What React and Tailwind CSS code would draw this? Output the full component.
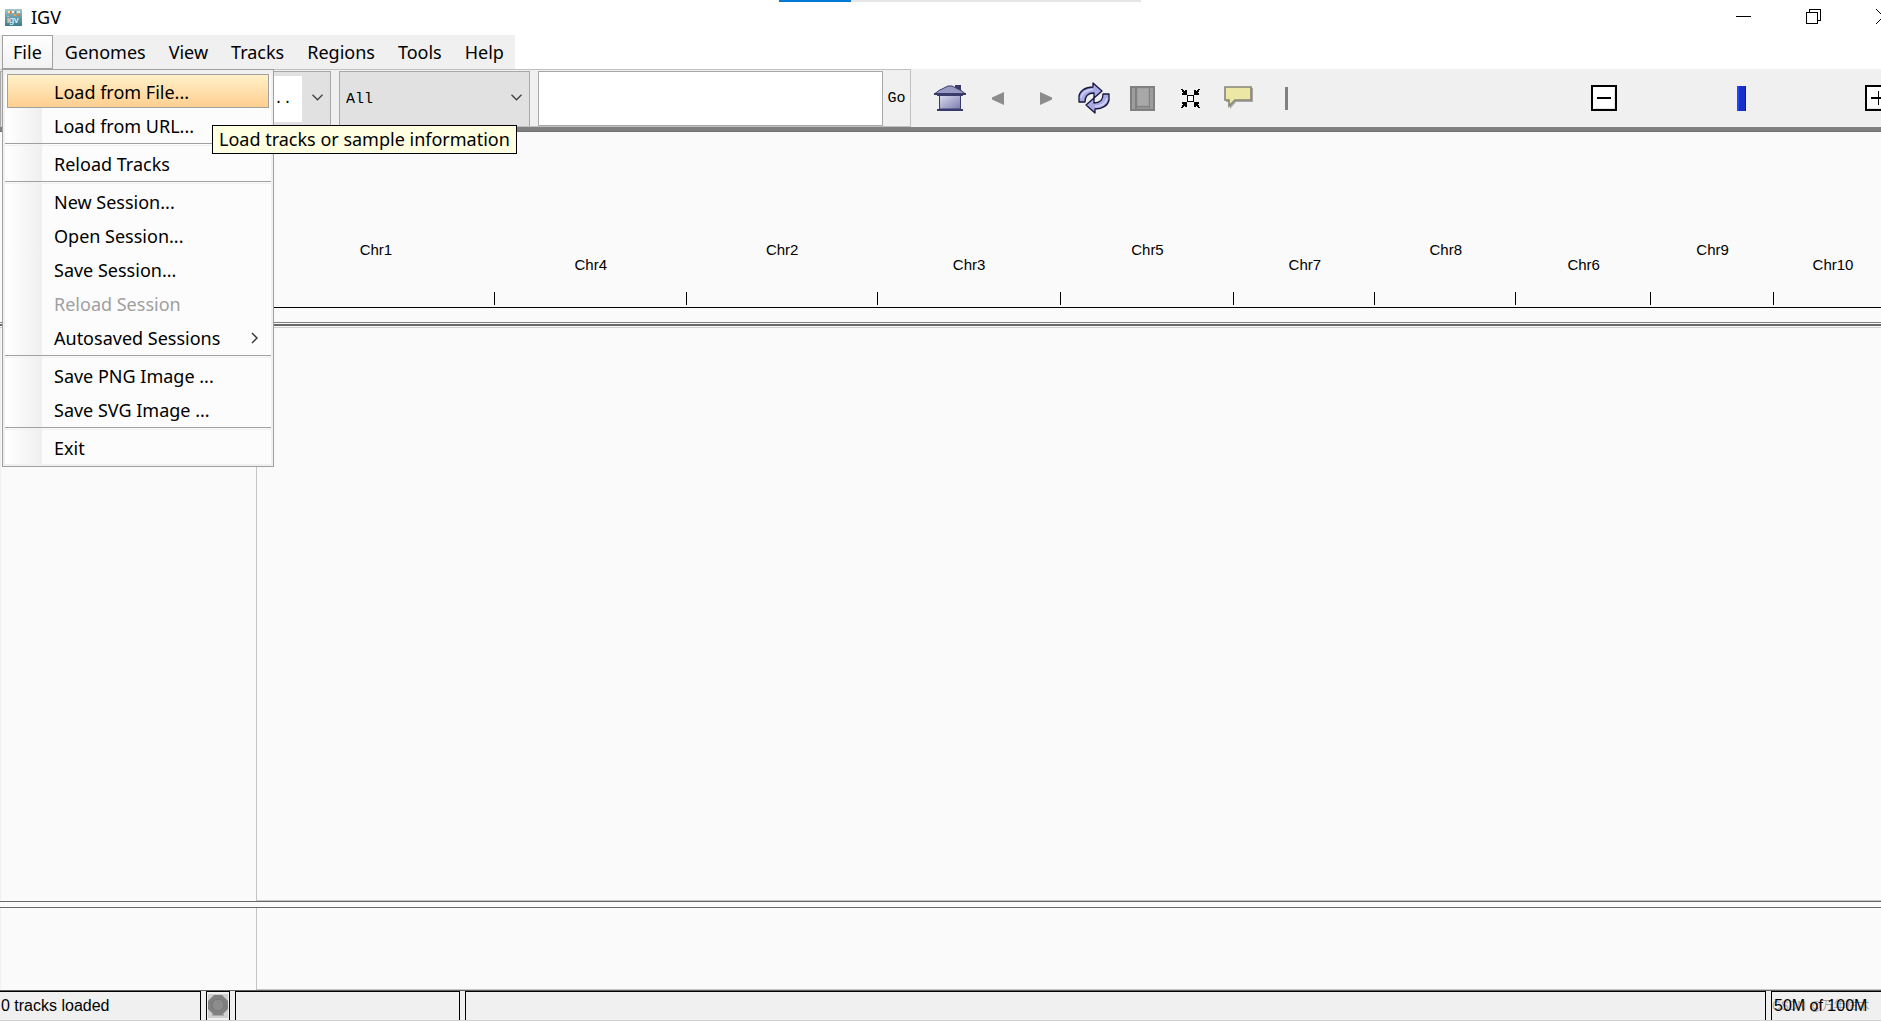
import React, { useState } from "react";

const menus = ["File", "Genomes", "View", "Tracks", "Regions", "Tools", "Help"];

// null = separator
const fileMenu = [
  { label: "Load from File...", tip: "Load tracks or sample information" },
  { label: "Load from URL..." },
  null,
  { label: "Reload Tracks" },
  null,
  { label: "New Session..." },
  { label: "Open Session..." },
  { label: "Save Session..." },
  { label: "Reload Session", disabled: true },
  { label: "Autosaved Sessions", sub: true },
  null,
  { label: "Save PNG Image ..." },
  { label: "Save SVG Image ..." },
  null,
  { label: "Exit" },
];

// Relative lengths, in genome order
const chromosomes = [
  { name: "Chr1", size: 238 },
  { name: "Chr4", size: 192 },
  { name: "Chr2", size: 191 },
  { name: "Chr3", size: 183 },
  { name: "Chr5", size: 174 },
  { name: "Chr7", size: 141 },
  { name: "Chr8", size: 141 },
  { name: "Chr6", size: 135 },
  { name: "Chr9", size: 123 },
  { name: "Chr10", size: 118 },
];

const LogoIcon = () => (
  <svg width="17" height="17" viewBox="0 0 17 17" shapeRendering="crispEdges">
    <defs>
      <linearGradient id="logo" x1="0" y1="0" x2="0" y2="1">
        <stop offset="0" stopColor="#a9c6cc" />
        <stop offset="0.4" stopColor="#6fa3b0" />
        <stop offset="1" stopColor="#3c7d90" />
      </linearGradient>
    </defs>
    <rect width="17" height="17" fill="url(#logo)" />
    <rect x="3" y="2" width="2" height="2" fill="#f6e7a0" />
    <rect x="5" y="2" width="1" height="3" fill="#e06a3c" />
    <rect x="7" y="2" width="2" height="2" fill="#f4f4e8" />
    <rect x="10" y="2" width="1" height="3" fill="#dd5f3c" />
    <rect x="12" y="2" width="3" height="2" fill="#f5e9b4" />
    <rect x="9" y="5" width="2" height="2" fill="#f0a53a" />
    <rect x="13" y="5" width="2" height="2" fill="#e8773c" />
    <text x="2" y="14" fontSize="9" fill="#ffffff" fontFamily="Liberation Sans">
      igv
    </text>
  </svg>
);

const HomeIcon = () => (
  <svg width="32" height="26" viewBox="0 0 32 26">
    <defs>
      <linearGradient id="wall" x1="0" y1="0" x2="1" y2="1">
        <stop offset="0" stopColor="#dcdcf2" />
        <stop offset="1" stopColor="#7c7cae" />
      </linearGradient>
    </defs>
    <path d="M21 0h6v7h-6z" fill="#3a3a6b" />
    <path d="M5.500 10h21v14h-21z" fill="url(#wall)" stroke="#3a3a6b" strokeWidth="1" />
    <path d="M1 8.500L5 5.500L14 1h4L27 5.500L31 8.500z" fill="#9999c6" stroke="#3a3a6b" strokeWidth="1" />
    <path d="M0 8h32v2h-3v1H3v-1H0zM3 24h26v2H3z" fill="#3a3a6b" />
  </svg>
);

const BackIcon = () => (
  <svg width="12" height="13" viewBox="0 0 12 13">
    <path d="M12 0v13L0 7.500v-2z" fill="#8c8c8c" />
  </svg>
);

const ForwardIcon = () => (
  <svg width="12" height="13" viewBox="0 0 12 13">
    <path d="M0 0v13L12 7.500v-2z" fill="#8c8c8c" />
  </svg>
);

const RefreshIcon = () => (
  <svg width="32" height="32" viewBox="0 0 32 32" strokeLinejoin="round">
    <g id="arrow">
      <path
        d="M1 20v-6C2 9 7 5 15 5V1L24 9L16 16V11C10 11 7 14 7 20z"
        fill="#a9a9e4"
        stroke="#16163c"
        strokeWidth="1.3"
      />
      <path d="M3 16c1-5 5-8 12-8.500" fill="none" stroke="#d2d2f6" strokeWidth="1.5" />
    </g>
    <use href="#arrow" transform="rotate(180 16 16)" />
  </svg>
);

const RegionIcon = () => (
  <svg width="25" height="25" viewBox="0 0 25 25" shapeRendering="crispEdges">
    <rect width="25" height="25" fill="#808080" />
    <rect x="2" y="2" width="3" height="21" fill="#9d9d9d" />
    <rect x="7" y="2" width="12" height="18" fill="#a0a0a0" />
    <rect x="8" y="3" width="10" height="16" fill="#a8a8a8" />
    <rect x="20" y="2" width="3" height="21" fill="#9d9d9d" />
    <rect x="7" y="21" width="12" height="2" fill="#939393" />
  </svg>
);

const FitIcon = () => (
  <svg width="19" height="19" viewBox="0 0 19 19" shapeRendering="crispEdges">
    <path d="M6 6h7v7H6z" fill="#fff" />
    <path
      d="M6 6h7v1H6zM6 12h7v1H6zM6 6h1v7H6zM12 6h1v7h-1z
         M0 0h2v1h1v1h1v-1h2v5H1v-2h1v-1h-1v-2H0z
         M19 0h-2v1h-1v1h-1v-1h-2v5h5v-2h-1v-1h1v-2h1z
         M0 19h2v-1h1v-1h1v1h2v-5H1v2h1v1h-1v2H0z
         M19 19h-2v-1h-1v-1h-1v1h-2v-5h5v2h-1v1h1v2h1z"
      fill="#000"
    />
  </svg>
);

const CommentIcon = () => (
  <svg width="29" height="24" viewBox="0 0 29 24">
    <path d="M2 2h27v14H12L6 23V16H2z" fill="#a8a8a8" />
    <path d="M1 1h26v13H11L5 20V14H1z" fill="#ece7a5" stroke="#85857a" strokeWidth="1.6" />
  </svg>
);

const BarIcon = () => (
  <svg width="3" height="23">
    <rect width="3" height="23" fill="#808080" />
  </svg>
);

const ZoomIcon = ({ plus }) => (
  <svg width="26" height="26" viewBox="0 0 26 26" shapeRendering="crispEdges">
    <rect width="26" height="26" fill="#000" />
    <rect x="2" y="2" width="22" height="22" fill="#fff" />
    <path d="M3 23h20V5h1v19H3z" fill="#e4e4e4" />
    <rect x="6" y="12" width="14" height="2" fill="#000" />
    {plus && <rect x="13" y="6" width="1" height="14" fill="#000" />}
  </svg>
);

const Chevron = ({ className }) => (
  <svg className={className} width="11" height="7" viewBox="0 0 11 7">
    <path d="M0.500 0.800L5.500 5.800L10.500 0.800" fill="none" stroke="#404040" strokeWidth="1.3" />
  </svg>
);

const tools = [
  { label: "Home", Icon: HomeIcon },
  { label: "Back", Icon: BackIcon },
  { label: "Forward", Icon: ForwardIcon },
  { label: "Refresh", Icon: RefreshIcon },
  { label: "Define region", Icon: RegionIcon },
  { label: "Fit to window", Icon: FitIcon },
  { label: "Popup text", Icon: CommentIcon },
  { label: "Ruler", Icon: BarIcon },
];

const TitleBar = () => (
  <header className="relative flex h-[35px] items-start justify-between overflow-hidden bg-white">
    <div className="absolute left-[779px] top-0 flex h-[2px] w-[362px] bg-[#e5e5e5]">
      <div className="w-[72px] bg-[#0078d7]" />
    </div>
    <div className="flex h-[34px] items-center gap-[9px] pl-[5px]">
      <LogoIcon />
      <h1 className="text-[18px] leading-6">IGV</h1>
    </div>
    <div className="-mr-[10px] flex h-[33px] items-center gap-[55px]">
      <button aria-label="Minimize">
        <svg width="15" height="15" viewBox="0 0 15 15" shapeRendering="crispEdges">
          <rect y="7" width="15" height="1" />
        </svg>
      </button>
      <button aria-label="Restore">
        <svg width="15" height="15" viewBox="0 0 15 15" fill="none" stroke="#000" shapeRendering="crispEdges">
          <path d="M3.500 3V0.500h11v11H12M0.500 3.500h11v11H0.500z" />
        </svg>
      </button>
      <button aria-label="Close">
        <svg width="15" height="15" viewBox="0 0 15 15" stroke="#000">
          <path d="M0 0L15 15M15 0L0 15" />
        </svg>
      </button>
    </div>
  </header>
);

const FileMenu = ({ active, onHover }) => (
  <div className="absolute left-0 top-full z-10 w-[272px] border border-[#a0a0a0] bg-[#f0f0f0] p-[2px] pt-1">
    <div className="bg-[linear-gradient(to_right,#ffffff_0px,#efefef_37px,#fcfcfc_37px)]">
      {fileMenu.map((item, i) =>
        item === null ? (
          <div key={i} className="h-1 border-b border-[#f0f0f0] pt-px">
            <div className="h-px bg-[#a0a0a0]" />
          </div>
        ) : (
          <div key={item.label} className="relative px-[2px]">
            <button
              disabled={item.disabled}
              onMouseEnter={() => onHover(item.label)}
              className={`flex h-[34px] w-full items-center justify-between border pl-[46px] pr-[10px] pt-px text-left ${
                active === item.label
                  ? "border-[#a0a0a0] bg-linear-to-b from-[#fff0c8] to-[#ffcf8f]"
                  : "border-transparent"
              } ${item.disabled ? "text-[#a0a0a0]" : "text-black"}`}
            >
              {item.label}
              {item.sub && (
                <svg width="7" height="12" viewBox="0 0 7 12">
                  <path d="M1 1L6 6L1 11" fill="none" stroke="#333" strokeWidth="1.4" />
                </svg>
              )}
            </button>
            {item.tip && active === item.label && (
              <div
                role="tooltip"
                className="absolute left-[207px] top-[51px] z-20 whitespace-nowrap border border-black bg-[#ffffe1] px-[6px] leading-[27px]"
              >
                {item.tip}
              </div>
            )}
          </div>
        )
      )}
    </div>
  </div>
);

const MenuBar = () => {
  const [active, setActive] = useState("Load from File...");

  return (
    <nav className="flex h-[34px] bg-white text-[18px] leading-6">
      <div className="flex gap-px bg-[#f0f0f0] pl-[2px]">
        {menus.map((name) => (
          <div key={name} className="relative flex">
            <button
              className={`border px-[10px] ${
                name === "File" ? "border-[#a0a0a0] bg-linear-to-b from-white to-[#f2f2f2]" : "border-transparent"
              }`}
            >
              {name}
            </button>
            {name === "File" && <FileMenu active={active} onHover={setActive} />}
          </div>
        ))}
      </div>
    </nav>
  );
};

const Toolbar = () => (
  <div className="flex h-[58px] overflow-hidden bg-[#f0f0f0] font-['Liberation_Mono',monospace] text-[15px]">
    <div className="flex w-[911px] shrink-0 border-y border-r border-[#c0c0c0] pt-px">
      <div className="relative flex w-[331px] border border-b-0 border-[#a8a8a8] bg-[#e1e1e1] py-1 pl-1">
        <select
          aria-label="Genome"
          className="mr-[28px] w-full appearance-none bg-white pl-[260px] pt-[2px]"
        >
          <option>...</option>
        </select>
        <Chevron className="pointer-events-none absolute right-[7px] top-[22px]" />
      </div>
      <div className="relative ml-2 flex w-[191px] border border-b-0 border-[#a8a8a8] bg-[#e1e1e1]">
        <select aria-label="Chromosome" className="w-full appearance-none pl-[6px] pt-[2px]">
          <option>All</option>
        </select>
        <Chevron className="pointer-events-none absolute right-[7px] top-[22px]" />
      </div>
      <input
        aria-label="Search"
        className="ml-2 min-w-0 flex-1 border border-[#a8a8a8] bg-white px-2"
      />
      <button className="w-[27px] pt-[2px]">Go</button>
    </div>
    <div className="flex items-center pl-[15px]">
      {tools.map(({ label, Icon }) => (
        <button key={label} aria-label={label} className="flex w-12 justify-center">
          <Icon />
        </button>
      ))}
    </div>
    <div className="-mr-[10px] ml-auto flex shrink-0 items-center">
      <button aria-label="Zoom out">
        <ZoomIcon />
      </button>
      <div className="flex w-[248px] justify-center">
        <svg width="9" height="25" shapeRendering="crispEdges">
          <rect width="9" height="25" fill="#1830c8" />
          <rect width="2" height="25" fill="#2048ff" />
          <rect x="8" width="1" height="25" fill="#102090" />
        </svg>
      </div>
      <button aria-label="Zoom in">
        <ZoomIcon plus />
      </button>
    </div>
  </div>
);

const Ruler = () => (
  <div className="flex h-[190px] flex-col overflow-hidden bg-[#fafafa] pl-[257px] font-['Liberation_Sans',sans-serif] text-[15px] leading-4">
    <div className="-mr-[11px] flex h-[176px] border-b border-black pb-[2px]">
      {chromosomes.map((chr, i) => (
        <div
          key={chr.name}
          className="relative flex min-w-0 basis-0 flex-col items-center justify-between"
          style={{ flexGrow: chr.size }}
        >
          <span className={i % 2 ? "pt-[125px]" : "pt-[110px]"}>{chr.name}</span>
          <span className="h-[13px] w-px self-end bg-black" />
        </div>
      ))}
    </div>
  </div>
);

const TrackPanel = ({ className }) => (
  <div className={`flex bg-[#fafafa] ${className}`}>
    <div className="w-[256px] border-l border-[#f0f0f0]" />
    <div className="flex-1 border-b border-l border-[#c4c4c4]" />
  </div>
);

const StatusBar = () => (
  <footer className="flex h-[31px] gap-[5px] border-b border-t border-b-[#d0d0d0] border-t-[#606060] bg-[#f0f0f0] font-['Liberation_Sans','Noto_Sans_CJK_SC',sans-serif] text-base leading-7">
    <div className="w-[201px] border-r border-t border-black pl-px">0 tracks loaded</div>
    <div className="flex w-6 items-center justify-center border-x border-t border-black">
      <svg width="20" height="24" viewBox="0 0 20 24">
        <rect width="20" height="24" fill="#cfcfcf" />
        <path d="M4 20h12v2H4z" fill="#a8a8a8" />
        <path d="M6 1h8l6 6v8l-6 6H6l-6-6V7z" fill="#808080" />
        <circle cx="10" cy="11" r="6" fill="#8c8c8c" stroke="#777777" />
      </svg>
    </div>
    <div className="w-[225px] border-x border-t border-black" />
    <div className="flex-1 border-x border-t border-black" />
    <div className="relative w-[110px] border-l border-t border-black pl-[2px]">
      50M of 100M
      <span className="absolute left-0 top-1 whitespace-nowrap text-xs leading-5 text-black/35">CSDN @万年枯木</span>
    </div>
  </footer>
);

const App = () => {
  return (
    <div className="flex h-screen flex-col overflow-hidden bg-white font-['Noto_Sans','Noto_Sans_CJK_SC',sans-serif] text-black">
      <TitleBar />
      <MenuBar />
      <Toolbar />
      <div className="h-[5px] border-b border-[#707070] bg-[#808080]" />
      <Ruler />
      <div className="h-[6px] border-b border-t border-b-[#d0d0d0] border-t-[#808080] bg-[#fafafa] pt-px">
        <div className="h-[2px] bg-[#686868]" />
      </div>
      <TrackPanel className="flex-1" />
      <div className="h-[7px] border-y border-[#686868] bg-[#fafafa]" />
      <TrackPanel className="h-[82px]" />
      <StatusBar />
    </div>
  );
};

export default App;
